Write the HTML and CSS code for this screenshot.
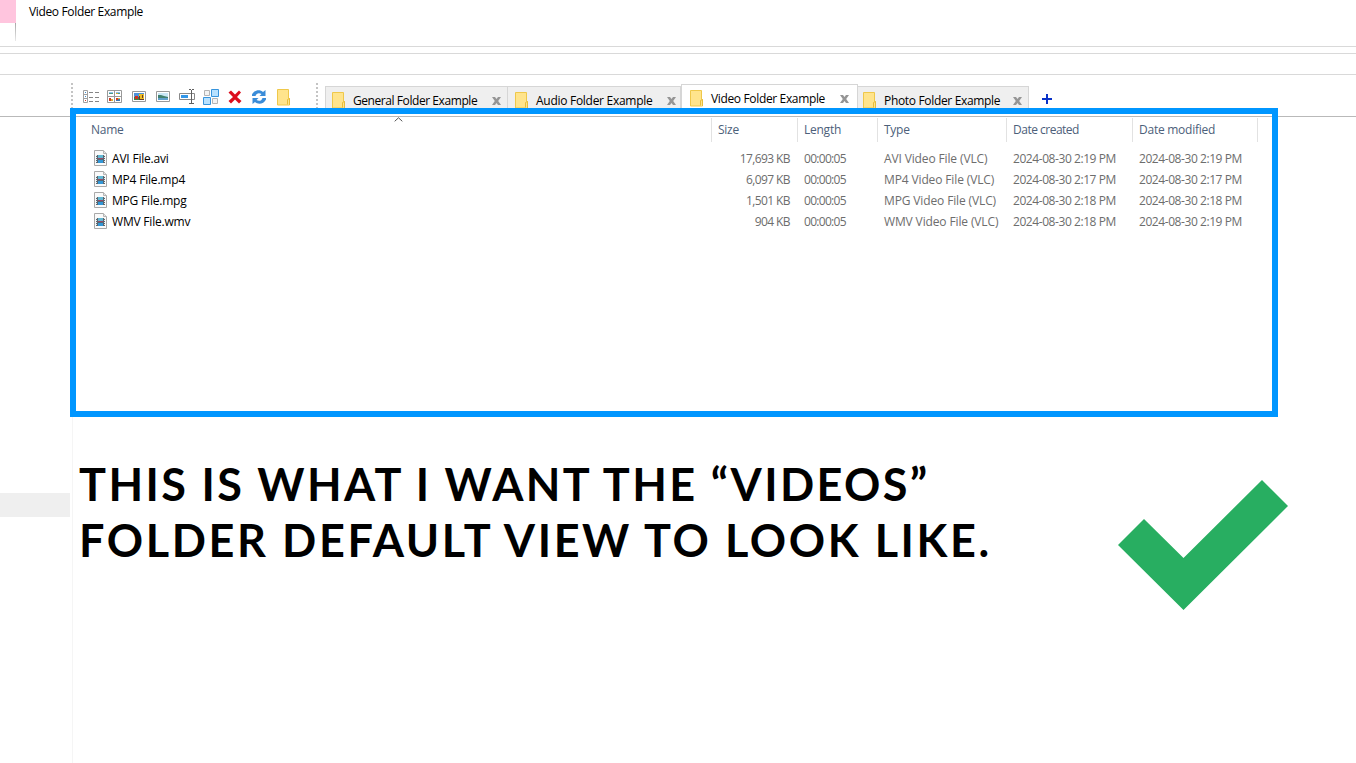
FILE: index.html
```html
<!DOCTYPE html>
<html lang="en">
<head>
    <meta charset="UTF-8">
    <meta name="viewport" content="width=device-width, initial-scale=1.0">
    <title>Video Folder Example</title>
    <link rel="stylesheet" href="styles.css">
</head>
<body>
    <svg class="defs" width="0" height="0">
        <symbol id="folder" viewBox="0 0 14 17">
            <path d="M.5.5h11v9l1 0v6.500h-12z" fill="#ffe48c" stroke="#efc84a"/>
            <path d="M10.500 15.500v-5l2-1v6.500" fill="#ffe48c" stroke="#e8bd3a"/>
        </symbol>
        <symbol id="close" viewBox="0 0 9 8">
            <path d="M0 0h3l1.500 2L6 0h3L6.200 4 9 8H6L4.500 6 3 8H0l2.800-4z" fill="#959595"/>
        </symbol>
        <symbol id="video" viewBox="0 0 14 16">
            <path d="M.5.500h9l3 3v12h-12z" fill="#fafafa" stroke="#a9a9a9"/>
            <path d="M9.500.500v3h3" fill="#e6e6e6" stroke="#b5b5b5"/>
            <path d="M2 5h9v8H2z" fill="#5b666f"/>
            <path d="M4 5h5v3H4z" fill="#62b8d4"/>
            <path d="M4 10h5v3H4z" fill="#3298d8"/>
            <path d="M4 8h5v1H4z" fill="#9a4866"/>
            <path d="M2.500 5v8M10.500 5v8" stroke="#e8eef0" stroke-dasharray="1 1"/>
        </symbol>
    </svg>

    <div class="titlebar">
        <div class="accent"></div>
        <div class="title">Video Folder Example</div>
    </div>
    <div class="ribbon"></div>
    <div class="address"></div>

    <div class="toolbar">
        <div class="handle"></div>
        <div class="tools">
            <svg width="16" height="16" viewBox="0 0 16 16">
                <path d="M.5 1.500h4v12h-4zM.5 5.500h4M.5 9.500h4" fill="#fff" stroke="#a0a0a0"/>
                <path d="M6 3.500h4m2 0h4M6 8.500h4m2 0h4M6 12.500h4m2 0h4" stroke="#858585"/>
                <path d="M2 3h1v1H2z" fill="#3c8fd0"/><path d="M2 7h1v1H2z" fill="#3c8fd0"/><path d="M2 11h1v1H2z" fill="#d04030"/>
            </svg>
            <svg width="16" height="16" viewBox="0 0 16 16">
                <path d="M.5 1.500h14v12H.5zM7.500 1.500v12M.5 7.500h14" fill="#fff" stroke="#999"/>
                <path d="M2 3h4v1H2zM9 3h4v1H9z" fill="#8fc4ec"/><path d="M2 4h4v1H2zM10 4h3v1h-3z" fill="#4c9a85"/>
                <path d="M9 4h2v1H9z" fill="#d8a734"/><path d="M2 9h2v3H2zM9 9h2v2H9z" fill="#cf3a24"/>
                <path d="M4 10h2v2H4zM11 9h2v1h-2z" fill="#ddb32f"/><path d="M9 11h4v1H9zM11 10h2v1h-2z" fill="#3d77b5"/>
            </svg>
            <svg width="16" height="16" viewBox="0 0 16 16">
                <path d="M1.500 2.500h13v10h-13z" fill="#fff" stroke="#999"/>
                <path d="M3 4h10v7H3z" fill="#4d91d9"/><path d="M3 8h5v3H3z" fill="#3c8047"/><path d="M4 7h3v3H4z" fill="#d02d20"/>
                <path d="M8 5h5v5H8z" fill="#edbd25"/><path d="M8 7h1v3H8zM11 6h1v3h-1zM8 10h5v1H8z" fill="#653925"/>
            </svg>
            <svg width="16" height="16" viewBox="0 0 16 16">
                <path d="M1.500 2.500h13v10h-13z" fill="#fff" stroke="#999"/>
                <path d="M3 4h10v4H3z" fill="#c9e6f5"/><path d="M3 6h3l3 1 4 1v1H3z" fill="#41806f"/><path d="M3 9h10v2H3z" fill="#5f9fcb"/>
            </svg>
            <svg width="17" height="16" viewBox="0 0 17 16">
                <path d="M.5 4.500h15v6H.5z" fill="#fff" stroke="#888"/>
                <path d="M2 6h7v3H2z" fill="#3396e8"/>
                <path d="M12.500 1v14M10 .5h2m1 0h2M10 14.500h2m1 0h2" stroke="#5f5f5f"/>
            </svg>
            <svg width="16" height="16" viewBox="0 0 16 16">
                <path d="M1.500 1.500h5v5h-5zM9.500 9.500h5v5h-5z" fill="#f3f3f3" stroke="#b4b4b4"/>
                <path d="M8.500.500h7v7h-7zM.5 8.500h7v7h-7z" fill="#b7e1ff" stroke="#3794dc"/>
            </svg>
            <svg width="16" height="16" viewBox="0 0 16 16">
                <path d="M1.500 3.500L4 1.500l4 4 4-4 2 2-4 4.500 4.500 4-2.500 2.500-4-4-4 4-2.500-2.500L6 8z" fill="#dc0d1c"/>
            </svg>
            <svg width="16" height="16" viewBox="0 0 16 16">
                <path d="M1 7V5.500C3 1 9 0 12 3l2.500-2v6H8.500l2-2C8 3.500 5.500 4 4.500 7z" fill="#3a8cd8"/>
                <path d="M15 9v1.500c-2 4.500-8 5.500-11 2.500l-2.500 2V9h6l-2 2c2.500 1.500 5 1 6-2z" fill="#3a8cd8"/>
            </svg>
            <svg class="new-folder" width="14" height="17"><use href="#folder"/></svg>
        </div>
        <div class="handle"></div>
        <div class="tabs">
            <div class="tab general"><svg class="folder"><use href="#folder"/></svg><span>General Folder Example</span><svg class="close"><use href="#close"/></svg></div>
            <div class="tab audio"><svg class="folder"><use href="#folder"/></svg><span>Audio Folder Example</span><svg class="close"><use href="#close"/></svg></div>
            <div class="tab video active"><svg class="folder"><use href="#folder"/></svg><span>Video Folder Example</span><svg class="close"><use href="#close"/></svg></div>
            <div class="tab photo"><svg class="folder"><use href="#folder"/></svg><span>Photo Folder Example</span><svg class="close"><use href="#close"/></svg></div>
        </div>
        <svg class="new-tab" width="10" height="10" viewBox="0 0 10 10"><path d="M5 0v10M0 5h10" stroke="#0a32c8" stroke-width="2"/></svg>
    </div>

    <div class="window">
        <div class="sidebar"><div class="selected"></div></div>
        <div class="content">
            <div class="row head">
                <div>Name</div><div>Size</div><div>Length</div><div>Type</div><div class="created">Date created</div><div>Date modified</div>
                <svg class="sort" width="9" height="5" viewBox="0 0 9 5"><path d="M.7 4.300l3.800-3.500 3.800 3.500" fill="none" stroke="#555"/></svg>
            </div>
            <div class="files">
                <div class="row">
                    <div class="name"><svg><use href="#video"/></svg>AVI File.avi</div><div class="size">17,693 KB</div><div class="len">00:00:05</div><div class="type">AVI Video File (VLC)</div><div class="date">2024-08-30 2:19 PM</div><div class="date">2024-08-30 2:19 PM</div>
                </div>
                <div class="row">
                    <div class="name"><svg><use href="#video"/></svg>MP4 File.mp4</div><div class="size">6,097 KB</div><div class="len">00:00:05</div><div class="type">MP4 Video File (VLC)</div><div class="date">2024-08-30 2:17 PM</div><div class="date">2024-08-30 2:17 PM</div>
                </div>
                <div class="row">
                    <div class="name"><svg><use href="#video"/></svg>MPG File.mpg</div><div class="size">1,501 KB</div><div class="len">00:00:05</div><div class="type">MPG Video File (VLC)</div><div class="date">2024-08-30 2:18 PM</div><div class="date">2024-08-30 2:18 PM</div>
                </div>
                <div class="row">
                    <div class="name"><svg><use href="#video"/></svg>WMV File.wmv</div><div class="size">904 KB</div><div class="len">00:00:05</div><div class="type">WMV Video File (VLC)</div><div class="date">2024-08-30 2:18 PM</div><div class="date">2024-08-30 2:19 PM</div>
                </div>
            </div>
            <div class="note">
                <div class="caption">
                    <div class="line1">THIS IS WHAT I WANT THE “VIDEOS”</div>
                    <div class="line2">FOLDER DEFAULT VIEW TO LOOK LIKE.</div>
                </div>
                <svg class="check" width="170" height="130" viewBox="0 0 170 130"><path d="M0 65l26-26 39.500 39L144 0l26 26L65.500 130z" fill="#28ae61"/></svg>
            </div>
        </div>
    </div>

    <!-- highlight around the file list -->
    <div class="highlight"></div>
</body>
</html>
```
FILE: styles.css
```css
* {
    box-sizing: border-box;
}
body {
    margin: 0;
    width: 1356px;
    height: 763px;
    overflow: hidden;
    position: relative;
    display: flex;
    flex-direction: column;
    background: #fff;
    color: #000;
    font-family: "Open Sans", sans-serif;
    font-size: 12px;
    line-height: 16px;
    letter-spacing: -0.2px;
    white-space: nowrap;
}
svg {
    display: block;
    flex: none;
}
.defs {
    position: absolute;
}
.titlebar {
    display: flex;
    height: 47px;
    border-bottom: 1px solid #d9d9d9;
}
.accent {
    width: 16px;
    height: 41px;
    background: linear-gradient(#ffc5de, #ffc5de) 0 0 / 16px 23px no-repeat,
        linear-gradient(#a8a8a8, #e8e8e8) 15px 23px / 1px 18px no-repeat;
}
.title {
    padding: 4px 0 0 13px;
    letter-spacing: -0.35px;
}
.ribbon {
    height: 7px;
    border-bottom: 1px solid #d9d9d9;
}
.address {
    height: 21px;
    border-bottom: 1px solid #d9d9d9;
}
.toolbar {
    display: flex;
    align-items: flex-start;
    height: 42px;
    padding: 8px 0 0 71px;
    border-bottom: 1px solid #b9b9b9;
}
.handle {
    width: 2px;
    height: 26px;
    background: repeating-linear-gradient(#c4c4c4 0 2px, #fff 2px 4px);
}
.tools {
    display: grid;
    grid-template-columns: repeat(9, 24px);
    width: 243px;
    padding: 6px 0 0 10px;
}
.new-folder {
    margin-left: 2px;
}
.tabs {
    display: flex;
    align-items: flex-start;
    margin: 1px 0 0 7px;
}
.tab {
    display: flex;
    align-items: flex-start;
    height: 26px;
    margin-top: 2px;
    padding: 5px 6px 0 6px;
    background: #efefef;
    border: 1px solid #d6d6d6;
    border-width: 1px 1px 0 0;
    letter-spacing: -0.28px;
}
.tab .folder {
    width: 14px;
    height: 17px;
}
.tab span {
    flex: 1;
    padding: 1px 0 0 7px;
}
.tab .close {
    width: 9px;
    height: 8px;
    margin-top: 5px;
}
.general {
    width: 183px;
    border-left-width: 1px;
    letter-spacing: -0.43px;
}
.audio {
    width: 173px;
    padding-left: 7px;
    padding-right: 4px;
}
.video {
    width: 177px;
    border-left-width: 1px;
    letter-spacing: -0.35px;
}
.photo {
    width: 171px;
    padding-left: 5px;
    letter-spacing: -0.33px;
}
.active {
    height: 28px;
    margin-top: 0;
    padding-left: 8px;
    padding-right: 8px;
    background: #fff;
}
.new-tab {
    margin: 11px 0 0 13px;
}
.window {
    display: flex;
    flex: 1;
}
.sidebar {
    width: 73px;
    padding-top: 376px;
    border-right: 1px solid #f5f5f5;
}
.selected {
    width: 70px;
    height: 24px;
    background: #efefef;
}
.content {
    flex: 1;
}
.row {
    display: grid;
    grid-template-columns: 639px 86px 80px 129px 126px 125px;
    height: 21px;
    align-items: center;
    color: #6d6d6d;
}
.row > div {
    padding-left: 6px;
}
.head {
    position: relative;
    height: 25px;
    padding-top: 1px;
    color: #4c607a;
    align-items: stretch;
}
.head > div {
    border-right: 1px solid #e2e2e2;
    padding-top: 4px;
    letter-spacing: -0.25px;
}
.head > .created {
    letter-spacing: -0.5px;
}
.row > div:first-child {
    padding-left: 18px;
}
.sort {
    position: absolute;
    left: 321px;
    top: 0;
}
.files {
    margin-top: 6px;
}
.row > .name:first-child {
    display: flex;
    align-items: center;
    gap: 4px;
    padding-left: 21px;
    color: #000;
}
.name svg {
    width: 14px;
    height: 16px;
    margin-top: -1px;
}
.size {
    text-align: right;
    padding-right: 8px;
    letter-spacing: -0.6px;
}
.len {
    letter-spacing: -0.7px;
}
.type {
    letter-spacing: -0.13px;
}
.date {
    letter-spacing: -0.43px;
}
.note {
    display: flex;
    margin-top: 224px;
}
.caption {
    width: 1045px;
    padding-left: 6px;
    font-family: "Lato", sans-serif;
    font-size: 45px;
    font-weight: 700;
    line-height: 56px;
}
.line1 {
    letter-spacing: 2.38px;
}
.line2 {
    letter-spacing: 2.6px;
}
.check {
    margin-top: 24px;
}
.highlight {
    position: absolute;
    left: 70px;
    top: 108px;
    width: 1208px;
    height: 309px;
    border: 6px solid #0096ff;
}
```
